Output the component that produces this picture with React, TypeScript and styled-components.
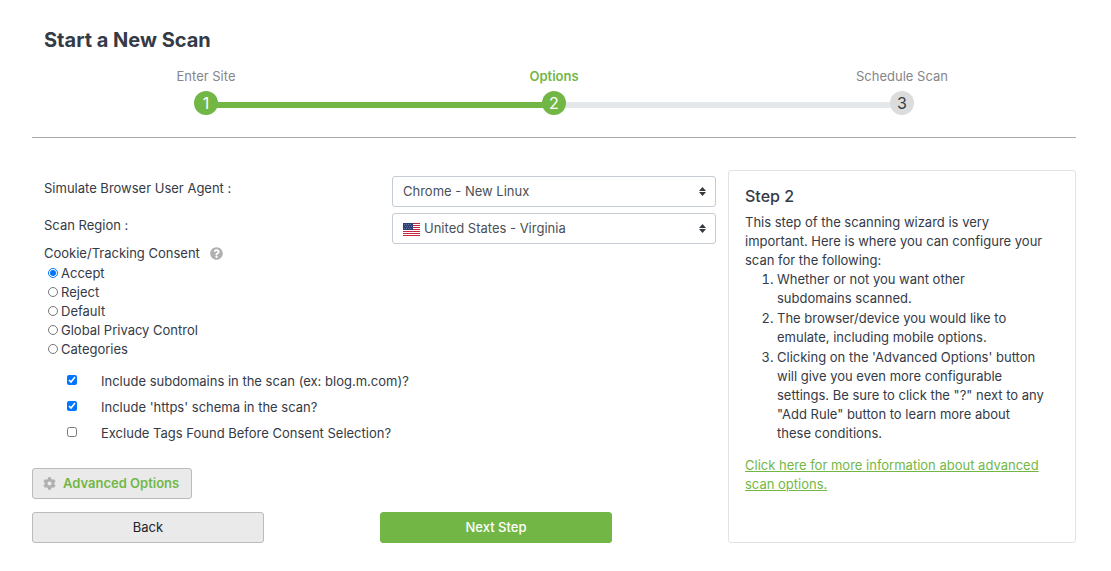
import React, { useState } from "react";
import styled, { createGlobalStyle } from "styled-components";

const green = "#72b746";
const ink = "#343a46";

const GlobalStyle = createGlobalStyle`
  *, *::before, *::after { box-sizing: border-box; }
  body {
    margin: 0;
    background: #fff;
    color: ${ink};
    font-family: Inter, "Open Sans", sans-serif;
    font-size: 13px;
    line-height: 19px;
  }
  button, select, input { font: inherit; color: inherit; }
`;

const Page = styled.main`
  padding: 27px 35px 28px 32px;
`;

const Title = styled.h1`
  margin: 0;
  padding: 0 12px;
  font-size: 20px;
  line-height: 26px;
  font-weight: 700;
`;

const Stepper = styled.ol`
  display: grid;
  grid-template-columns: repeat(3, 1fr);
  margin: 0;
  padding: 14px 0 22px;
  list-style: none;
  border-bottom: 1px solid #aaaaac;
`;

const StepLabel = styled.div<{ $active?: boolean }>`
  margin-bottom: 5px;
  text-align: center;
  color: ${(p) => (p.$active ? green : "#85858a")};
  font-weight: ${(p) => (p.$active ? 600 : 400)};
`;

const StepTrack = styled.div`
  display: flex;
  align-items: center;
`;

const StepLine = styled.span<{ $color: string }>`
  flex: 1;
  height: 6px;
  margin-top: 4px;
  background: ${(p) => p.$color};
`;

const StepCircle = styled.span<{ $done: boolean }>`
  width: 24px;
  height: 24px;
  margin: 0 -1px;
  border-radius: 50%;
  line-height: 24px;
  font-size: 16px;
  text-align: center;
  z-index: 1;
  background: ${(p) => (p.$done ? green : "#dcdcdc")};
  color: ${(p) => (p.$done ? "#fff" : ink)};
`;

const Columns = styled.div`
  display: grid;
  grid-template-columns: 2fr 1fr;
  margin-top: 32px;
`;

const Form = styled.form`
  display: flex;
  flex-direction: column;
  padding-top: 6px;
`;

const Fields = styled.div`
  display: grid;
  row-gap: 6px;
`;

const FieldRow = styled.div`
  display: grid;
  grid-template-columns: 1fr 1fr;
`;

const FieldLabel = styled.label`
  padding: 3px 12px 0;
`;

const SelectBox = styled.div`
  position: relative;
  margin: 0 12px;
`;

const Select = styled.select<{ $flag?: boolean }>`
  display: block;
  width: 100%;
  height: 31px;
  padding: 0 28px 0 ${(p) => (p.$flag ? 31 : 10)}px;
  border: 1px solid #c5ccd3;
  border-radius: 3px;
  background: #fff;
  color: #495057;
  appearance: none;
`;

const Flag = styled.svg`
  position: absolute;
  left: 11px;
  top: 10px;
  pointer-events: none;
`;

const Arrows = styled.svg`
  position: absolute;
  right: 10px;
  top: 11px;
  pointer-events: none;
`;

const Consent = styled.fieldset`
  margin: 0;
  padding: 0 12px;
  border: 0;
`;

const Legend = styled.legend`
  display: flex;
  align-items: center;
  gap: 10px;
  padding: 0;
  margin-bottom: 1px;
`;

const Radio = styled.label`
  display: flex;
  align-items: center;
  gap: 3px;
  height: 19px;

  input {
    width: 10px;
    height: 10px;
    margin: 0 0 2px 4px;
    accent-color: #0075ff;
  }
`;

const Checks = styled.div`
  padding: 9px 35px 0;
`;

const Check = styled.label`
  display: flex;
  align-items: center;
  gap: 24px;
  height: 26px;

  input {
    width: 10px;
    height: 10px;
    margin: 0 0 2px;
    accent-color: #0075ff;
  }
`;

const Button = styled.button<{ $primary?: boolean }>`
  height: 31px;
  padding: 0 10px;
  border: 1px solid ${(p) => (p.$primary ? green : "#b9bcbc")};
  border-radius: 3px;
  background: ${(p) => (p.$primary ? green : "#eaeaea")};
  color: ${(p) => (p.$primary ? "#fff" : "#212529")};
  font-weight: ${(p) => (p.$primary ? 500 : 400)};
  cursor: pointer;
`;

const AdvancedButton = styled(Button)`
  display: flex;
  align-items: center;
  align-self: flex-start;
  gap: 7px;
  padding: 0 12px 0 10px;
  margin: 22px 0 13px;
  color: ${green};
  font-weight: 600;
`;

const Actions = styled.div`
  display: grid;
  grid-template-columns: 2fr 1fr 2fr 1fr;

  ${Button}:last-child { grid-column: 3; }
`;

const Card = styled.aside`
  padding: 15px 16px;
  border: 1px solid #e2e3e5;
  border-radius: 3px;
`;

const CardTitle = styled.h2`
  margin: 0 0 7px;
  font-size: 16px;
  line-height: 20px;
  font-weight: 500;
`;

const CardText = styled.p`
  margin: 0;
`;

const CardList = styled.ol`
  margin: 0 0 13px;
  padding: 0 5px 0 32px;

  li + li { margin-top: 1px; }
`;

const CardLink = styled.a`
  color: ${green};
  text-decoration: underline;
`;

const steps = ["Enter Site", "Options", "Schedule Scan"];
const current = 1;
const consentOptions = ["Accept", "Reject", "Default", "Global Privacy Control", "Categories"];
const scanChecks = [
  { text: "Include subdomains in the scan (ex: blog.m.com)?", on: true },
  { text: "Include 'https' schema in the scan?", on: true },
  { text: "Exclude Tags Found Before Consent Selection?", on: false },
];

function lineColor(from: number) {
  if (from < 0 || from >= steps.length - 1) return "transparent";
  return from < current ? green : "#e5e8eb";
}

function UpDown() {
  return (
    <Arrows width="7" height="9" viewBox="0 0 7 9" aria-hidden="true">
      <path d="M0 4 L3.5 0 L7 4 Z M0 5 L3.5 9 L7 5 Z" fill="#343a40" />
    </Arrows>
  );
}

function UsFlag() {
  return (
    <Flag width="17" height="13" viewBox="0 0 17 13" aria-hidden="true">
      <rect width="17" height="13" fill="#fff" />
      {[0, 2, 4, 6, 8, 10, 12].map((y) => (
        <rect key={y} y={y} width="17" height="1" fill="#c5283d" />
      ))}
      <rect width="10" height="7" fill="#2e3f73" />
      {[1, 3, 5].map((y) =>
        [1, 3, 5, 7].map((x) => (
          <rect key={`${x}-${y}`} x={x + (y === 3 ? 1 : 0)} y={y} width="1" height="1" fill="#66759d" />
        ))
      )}
    </Flag>
  );
}

function HelpIcon() {
  return (
    <svg width="13" height="13" viewBox="0 0 512 512" role="img" aria-label="Help">
      <path
        fill="#b0b0b0"
        d="M504 256c0 137-111 248-248 248S8 393 8 256 119 8 256 8s248 111 248 248zM262.700 90c-54.500 0-89.300 23-116.500 63.800-3.500 5.300-2.400 12.400 2.700 16.300l34.700 26.300c5.200 3.900 12.600 3 16.700-2.100 17.900-22.700 30.100-35.800 57.300-35.800 20.400 0 45.700 13.100 45.700 33 0 15-12.400 22.700-32.500 34C247.100 238.500 216 255 216 296v4c0 6.600 5.400 12 12 12h56c6.600 0 12-5.400 12-12v-1.300c0-28.700 83.800-29.900 83.800-107.500C379.800 132.700 319.100 90 262.700 90zM256 338c-25.400 0-46 20.600-46 46s20.600 46 46 46 46-20.600 46-46-20.600-46-46-46z"
      />
    </svg>
  );
}

function GearIcon() {
  return (
    <svg width="13" height="13" viewBox="0 0 512 512" aria-hidden="true">
      <path
        fill="#b0b0b0"
        d="M487.400 315.700l-42.600-24.600c4.300-23.200 4.300-47 0-70.200l42.600-24.600c4.900-2.800 7.100-8.600 5.500-14-11.100-35.600-30-67.800-54.700-94.600-3.800-4.100-10-5.100-14.800-2.300L380.800 110c-17.900-15.400-38.500-27.300-60.800-35.100V25.800c0-5.600-3.900-10.500-9.400-11.700-36.700-8.200-74.300-7.800-109.200 0-5.500 1.200-9.400 6.100-9.400 11.700V75c-22.200 7.900-42.800 19.800-60.800 35.100L88.700 85.500c-4.900-2.800-11-1.900-14.800 2.300-24.700 26.700-43.600 58.900-54.700 94.600-1.700 5.400.6 11.200 5.500 14L67.300 221c-4.300 23.200-4.300 47 0 70.200l-42.600 24.600c-4.900 2.800-7.100 8.600-5.500 14 11.100 35.600 30 67.800 54.700 94.600 3.800 4.100 10 5.100 14.800 2.300l42.600-24.600c17.900 15.400 38.500 27.300 60.800 35.100v49.200c0 5.600 3.900 10.500 9.400 11.700 36.700 8.200 74.300 7.800 109.200 0 5.500-1.200 9.400-6.100 9.400-11.700v-49.200c22.200-7.900 42.800-19.800 60.800-35.100l42.600 24.600c4.900 2.800 11 1.900 14.800-2.300 24.700-26.700 43.600-58.900 54.700-94.600 1.500-5.500-.7-11.300-5.600-14.100zM256 336c-44.100 0-80-35.900-80-80s35.900-80 80-80 80 35.900 80 80-35.900 80-80 80z"
      />
    </svg>
  );
}

export default function App() {
  const [consent, setConsent] = useState(consentOptions[0]);

  return (
    <>
      <GlobalStyle />
      <Page>
        <Title>Start a New Scan</Title>
        <Stepper>
          {steps.map((label, i) => (
            <li key={label}>
              <StepLabel $active={i === current}>{label}</StepLabel>
              <StepTrack>
                <StepLine $color={lineColor(i - 1)} />
                <StepCircle $done={i <= current}>{i + 1}</StepCircle>
                <StepLine $color={lineColor(i)} />
              </StepTrack>
            </li>
          ))}
        </Stepper>

        <Columns>
          <Form onSubmit={(e) => e.preventDefault()}>
            <Fields>
              <FieldRow>
                <FieldLabel htmlFor="agent">Simulate Browser User Agent :</FieldLabel>
                <SelectBox>
                  <Select id="agent">
                    <option>Chrome - New Linux</option>
                  </Select>
                  <UpDown />
                </SelectBox>
              </FieldRow>
              <FieldRow>
                <FieldLabel htmlFor="region">Scan Region :</FieldLabel>
                <SelectBox>
                  <Select id="region" $flag>
                    <option>United States - Virginia</option>
                  </Select>
                  <UsFlag />
                  <UpDown />
                </SelectBox>
              </FieldRow>
            </Fields>

            <Consent>
              <Legend>
                Cookie/Tracking Consent <HelpIcon />
              </Legend>
              {consentOptions.map((option) => (
                <Radio key={option}>
                  <input
                    type="radio"
                    name="consent"
                    checked={consent === option}
                    onChange={() => setConsent(option)}
                  />
                  {option}
                </Radio>
              ))}
            </Consent>

            <Checks>
              {scanChecks.map((c) => (
                <Check key={c.text}>
                  <input type="checkbox" defaultChecked={c.on} />
                  {c.text}
                </Check>
              ))}
            </Checks>

            <AdvancedButton type="button">
              <GearIcon />
              Advanced Options
            </AdvancedButton>

            <Actions>
              <Button type="button">Back</Button>
              <Button type="submit" $primary>
                Next Step
              </Button>
            </Actions>
          </Form>

          <Card>
            <CardTitle>Step 2</CardTitle>
            <CardText>
              This step of the scanning wizard is very important.&nbsp;Here is where you can configure your scan for
              the following:
            </CardText>
            <CardList>
              <li>Whether or not you want other subdomains&nbsp;scanned.</li>
              <li>The browser/device you would like to emulate, including mobile options.</li>
              <li>
                Clicking on the 'Advanced Options' button will give you even more configurable settings. Be sure to
                click the "?" next to any "Add Rule" button to learn more about these&nbsp;conditions.
              </li>
            </CardList>
            <CardLink href="#advanced">Click here for more information about advanced scan options.</CardLink>
          </Card>
        </Columns>
      </Page>
    </>
  );
}
